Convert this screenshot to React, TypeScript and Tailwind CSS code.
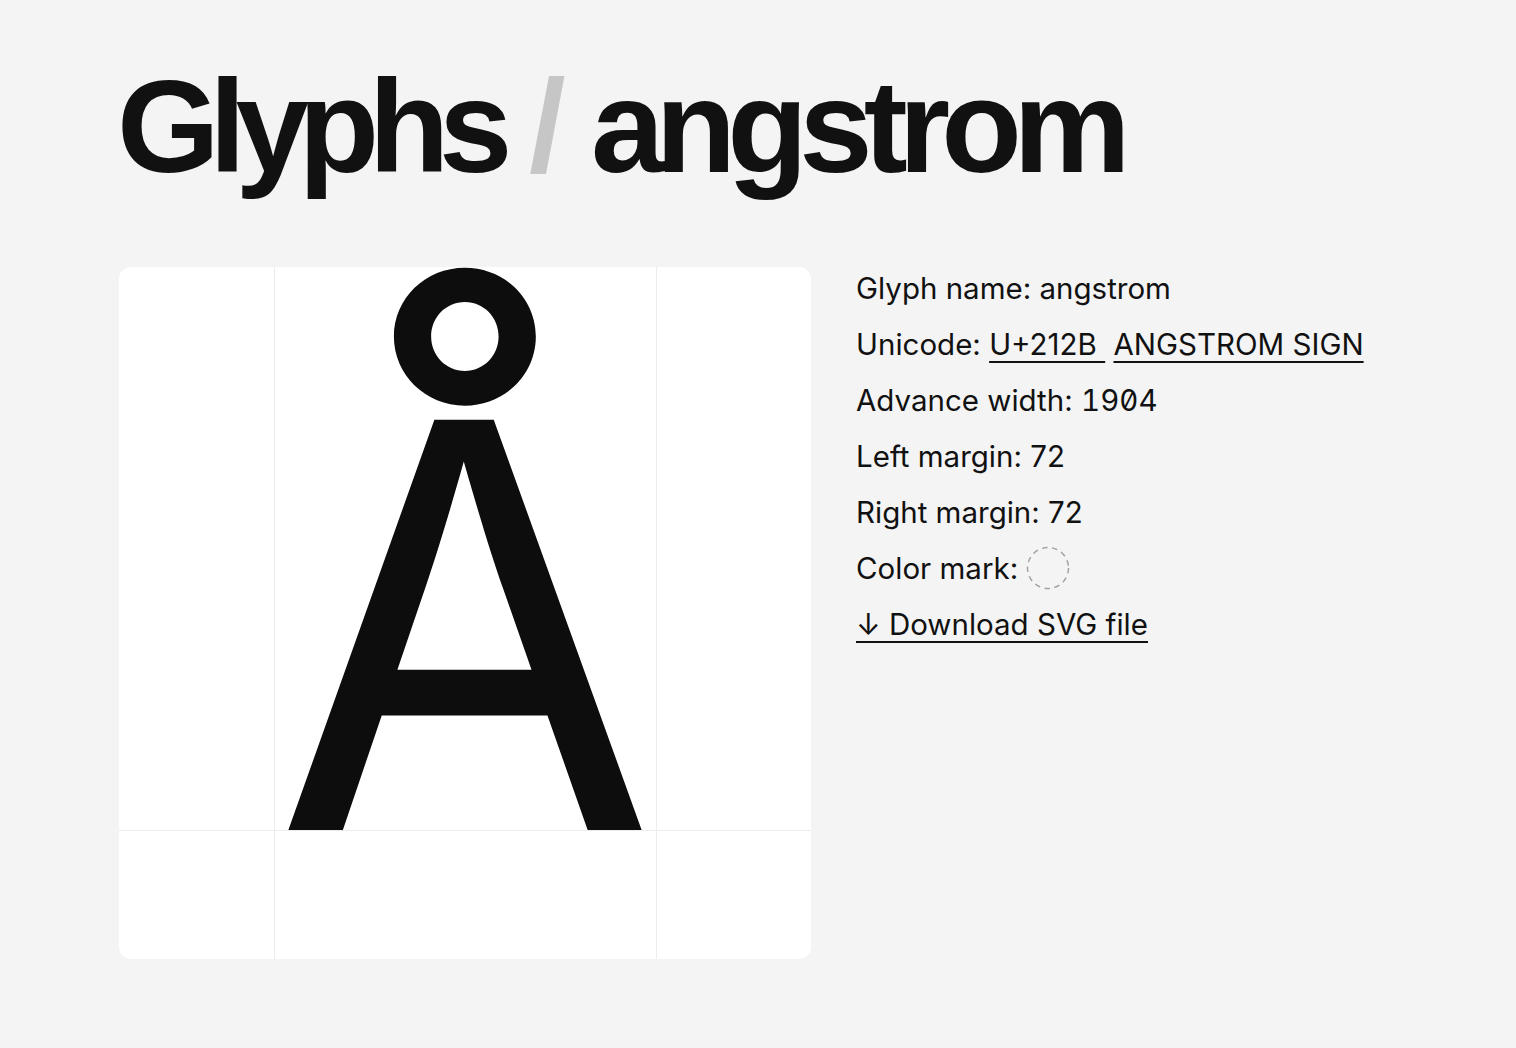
import React from "react";

const linkCls = "underline underline-offset-[6px] decoration-[1.5px]";

function GlyphCard() {
  return (
    <div className="relative w-[692px] h-[692px] shrink-0 bg-white rounded-xl overflow-hidden">
      <svg width="692" height="692" viewBox="0 0 692 692" className="block">
        <line x1="155.5" y1="0" x2="155.5" y2="692" stroke="#ececec" strokeWidth="1" />
        <line x1="537.5" y1="0" x2="537.5" y2="692" stroke="#ececec" strokeWidth="1" />
        <line x1="0" y1="563.5" x2="692" y2="563.5" stroke="#ececec" strokeWidth="1" />
        <g transform="translate(346 563) scale(0.98 1)">
          <text
            x="0"
            y="0"
            textAnchor="middle"
            fontFamily="Inter, 'Noto Sans', sans-serif"
            fontWeight="400"
            fontSize="564"
            fill="#0d0d0d"
          >
            Å
          </text>
        </g>
      </svg>
    </div>
  );
}

function ColorMark() {
  return (
    <svg width="44" height="44" viewBox="0 0 44 44" className="ml-[8px]">
      <circle cx="22" cy="22" r="20.5" fill="none" stroke="#a3a3a3" strokeWidth="1.5" strokeDasharray="5.5 4.5" />
    </svg>
  );
}

export default function App() {
  return (
    <div className="min-h-screen w-full bg-[#f4f4f4] text-[#111]">
      <div className="pl-[117px] pt-[61px]">
        <h1 className="font-['Liberation_Sans',Arial,sans-serif] font-bold text-[132px] leading-none tracking-[-0.073em] whitespace-nowrap">
          <span className="tracking-[-0.079em]">Glyphs</span> <span className="text-[#c6c6c6]">/</span>{" "}
          <span className="ml-[8px] tracking-[-0.067em]">angstrom</span>
        </h1>

        <div className="mt-[74px] flex items-start gap-[46px] pl-[2px]">
          <GlyphCard />

          <div className="font-['Inter','Noto_Sans',sans-serif] text-[29.5px] leading-[56px] text-[#111] -mt-[7px] -ml-[1px]">
            <p>Glyph name: angstrom</p>
            <p>
              Unicode: <a href="#" className={linkCls}>U+212B&nbsp;</a>{" "}
              <a href="#" className={linkCls}>ANGSTROM SIGN</a>
            </p>
            <p>
              Advance width: <span className="tabular-nums slashed-zero">1904</span>
            </p>
            <p>Left margin: 72</p>
            <p>Right margin: 72</p>
            <p className="flex items-center h-[56px]">
              Color mark:
              <ColorMark />
            </p>
            <p>
              <a href="#" className={linkCls}>
                ↓ Download SVG file
              </a>
            </p>
          </div>
        </div>
      </div>
    </div>
  );
}
